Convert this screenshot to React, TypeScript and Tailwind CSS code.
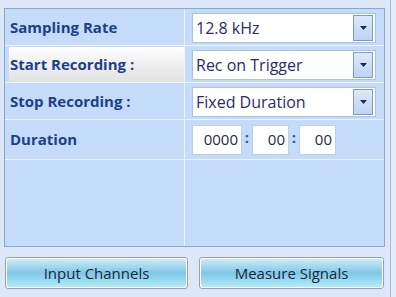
import React from "react";

const labelFont = { fontFamily: '"Open Sans", "Liberation Sans", sans-serif' };

function Arrow() {
  return (
    <svg width="7" height="4" viewBox="0 0 7 4">
      <path d="M0 0 H7 L3.5 4 Z" fill="#1a2a5a" />
    </svg>
  );
}

function Dropdown({ value }: { value: string }) {
  return (
    <div className="ml-[7px] mt-[4px] w-[184px] h-[30px] border border-[#abc3e3] bg-white flex items-center justify-between pl-[3px] pr-[2px]">
      <span className="text-[16px] text-[#2e2a70] leading-none" style={labelFont}>{value}</span>
      <div className="w-[20px] h-[26px] border border-[#7d9bc6] bg-gradient-to-b from-[#dde9fb] to-[#bdd4f4] flex items-center justify-center">
        <Arrow />
      </div>
    </div>
  );
}

function Label({ text, pad = "pl-[5px]" }: { text: string; pad?: string }) {
  return (
    <span className={`${pad} text-[15px] font-bold text-[#1d3f8c] leading-none`} style={labelFont}>
      {text}
    </span>
  );
}

function Box({ w, v }: { w: string; v: string }) {
  return (
    <div className={`${w} h-[30px] border border-[#bcd0ea] bg-white flex items-center justify-end pr-[3px]`}>
      <span className="text-[15px] text-[#2a2a3a] leading-none" style={labelFont}>{v}</span>
    </div>
  );
}

function Colon() {
  return <span className="w-[10px] text-center text-[15px] font-bold text-[#2a58b0] leading-none -mt-[4px]" style={labelFont}>:</span>;
}

function Btn({ text }: { text: string }) {
  return (
    <div className="h-[32px] rounded-[3px] border border-[#94a4b6] p-[1px] bg-white">
      <div className="h-full rounded-[2px] bg-gradient-to-b from-[#cdebf8] via-[#80c6e6] to-[#b2ecfa] flex items-center justify-center">
        <span className="text-[15px] text-[#1b2838] leading-none" style={labelFont}>{text}</span>
      </div>
    </div>
  );
}

export default function App() {
  return (
    <div className="w-[396px] h-[297px] bg-[#e3edf9] flex overflow-hidden">
      <div className="w-[391px] h-full border-r border-[#a6bcd9] bg-[#dce8f8] pt-[8px] pl-[4px]">
        <div className="w-[381px] h-[239px] border border-[#8ba7cd] bg-[#c4dbf9] flex">
          <div className="w-[180px] flex flex-col border-r border-[#eef4fc]">
            <div className="h-[37px] border-b border-[#eef4fc] flex items-center"><Label text="Sampling Rate" /></div>
            <div className="h-[37px] border-b border-[#eef4fc] pl-[4px] pt-[1px]">
              <div className="h-full bg-gradient-to-b from-[#fdfdfd] to-[#e2e2e2] flex items-center">
                <Label text="Start Recording :" pad="pl-[1px]" />
              </div>
            </div>
            <div className="h-[37px] border-b border-[#eef4fc] flex items-center"><Label text="Stop Recording :" /></div>
            <div className="h-[40px] border-b border-[#eef4fc] flex items-center"><Label text="Duration" /></div>
          </div>
          <div className="flex-1 flex flex-col">
            <div className="h-[37px] border-b border-[#eef4fc]"><Dropdown value="12.8 kHz" /></div>
            <div className="h-[37px] border-b border-[#eef4fc]"><Dropdown value="Rec on Trigger" /></div>
            <div className="h-[37px] border-b border-[#eef4fc]"><Dropdown value="Fixed Duration" /></div>
            <div className="h-[40px] border-b border-[#eef4fc] flex items-center pl-[7px]">
              <Box w="w-[50px]" v="0000" />
              <Colon />
              <Box w="w-[37px]" v="00" />
              <Colon />
              <Box w="w-[37px]" v="00" />
            </div>
          </div>
        </div>
        <div className="mt-[10px] flex gap-[11px] pl-[1px] w-[380px]">
          <div className="w-[183px]"><Btn text="Input Channels" /></div>
          <div className="w-[185px]"><Btn text="Measure Signals" /></div>
        </div>
      </div>
    </div>
  );
}
